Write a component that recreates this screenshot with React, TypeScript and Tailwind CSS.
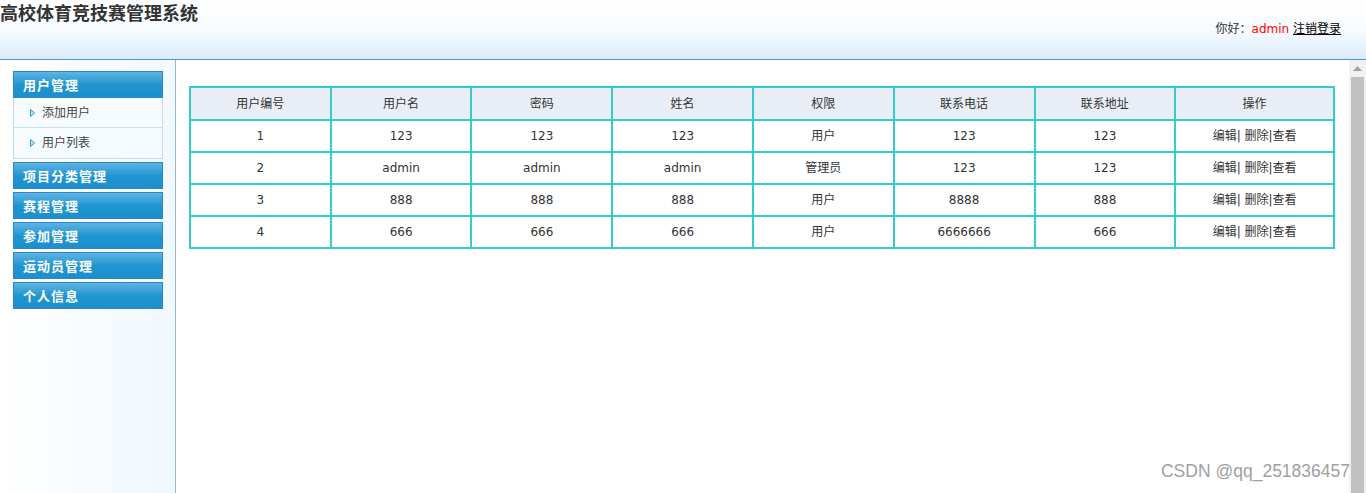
import React from 'react';

const font = '[font-family:"DejaVu_Sans","Noto_Sans_CJK_SC",sans-serif]';

type UserRow = {
  id: string;
  username: string;
  password: string;
  name: string;
  role: string;
  phone: string;
  address: string;
};

const users: UserRow[] = [
  { id: '1', username: '123', password: '123', name: '123', role: '用户', phone: '123', address: '123' },
  { id: '2', username: 'admin', password: 'admin', name: 'admin', role: '管理员', phone: '123', address: '123' },
  { id: '3', username: '888', password: '888', name: '888', role: '用户', phone: '8888', address: '888' },
  { id: '4', username: '666', password: '666', name: '666', role: '用户', phone: '6666666', address: '666' },
];

const columns = ['用户编号', '用户名', '密码', '姓名', '权限', '联系电话', '联系地址', '操作'];

/** Blue menu header bar */
function MenuHeader({ title }: { title: string }) {
  return (
    <div className="flex h-[27px] items-center border border-[#2f86c6] bg-gradient-to-b from-[#5db4e2] via-[#1f96d1] to-[#1c8fcc] pl-[9px] text-[13px] font-bold tracking-[1px] text-white [font-family:'Noto_Sans_CJK_SC',sans-serif]">
      {title}
    </div>
  );
}

function SubItem({ label }: { label: string }) {
  return (
    <div className="flex h-[30px] items-center gap-[7px] border-b border-[#cddfea] pl-[16px] text-[12px] text-[#444] last:border-b-0">
      <svg width="5" height="8" viewBox="0 0 5 8">
        <path d="M0.5 0.5 L4.5 4 L0.5 7.5 Z" fill="#bfe3f7" stroke="#3593d1" strokeWidth="1" />
      </svg>
      <span>{label}</span>
    </div>
  );
}

export default function App() {
  return (
    <div className={`relative flex h-screen flex-col overflow-hidden bg-white ${font}`}>
      {/* ===== HEADER ===== */}
      <header className="flex h-[60px] shrink-0 justify-between border-b border-[#4b92cf] bg-gradient-to-b from-white via-[#f7fbff] to-[#dcecfb]">
        <h1 className="pt-[1px] text-[18px] font-bold leading-[22px] text-[#333] [font-family:'Noto_Sans_CJK_SC',sans-serif]">
          高校体育竞技赛管理系统
        </h1>
        <div className="pr-[25px] pt-[20px] text-[12px] text-[#333]">
          你好：<span className="text-[#ff0000]">admin</span>{' '}
          <a className="text-black underline">注销登录</a>
        </div>
      </header>

      <div className="flex min-h-0 flex-1">
        {/* ===== SIDEBAR ===== */}
        <aside className="w-[176px] shrink-0 border-r border-[#93b7d3] bg-gradient-to-r from-white to-[#f1f8fe] px-[13px] pt-[11px]">
          <div className="w-[150px]">
            <MenuHeader title="用户管理" />
            <div className="border-x border-b border-[#c9dce8] bg-[#f6fbff]">
              <SubItem label="添加用户" />
              <SubItem label="用户列表" />
            </div>
            <div className="mt-[3px] flex flex-col gap-[3px]">
              <MenuHeader title="项目分类管理" />
              <MenuHeader title="赛程管理" />
              <MenuHeader title="参加管理" />
              <MenuHeader title="运动员管理" />
              <MenuHeader title="个人信息" />
            </div>
          </div>
        </aside>

        {/* ===== MAIN ===== */}
        <main className="min-w-0 flex-1 pl-[13px] pr-[14px] pt-[26px]">
          <table className="w-full border-collapse text-center text-[12px] text-[#333]">
            <thead>
              <tr className="bg-[#e9eef6]">
                {columns.map((c, i) => (
                  <th
                    key={c}
                    className={`h-[33px] border-2 border-[#33cccc] font-normal ${i === 7 ? 'w-[159px]' : 'w-[141px]'}`}
                  >
                    {c}
                  </th>
                ))}
              </tr>
            </thead>
            <tbody>
              {users.map((u) => (
                <tr key={u.id}>
                  <td className="h-[32px] border-2 border-[#33cccc]">{u.id}</td>
                  <td className="border-2 border-[#33cccc]">{u.username}</td>
                  <td className="border-2 border-[#33cccc]">{u.password}</td>
                  <td className="border-2 border-[#33cccc]">{u.name}</td>
                  <td className="border-2 border-[#33cccc]">{u.role}</td>
                  <td className="border-2 border-[#33cccc]">{u.phone}</td>
                  <td className="border-2 border-[#33cccc]">{u.address}</td>
                  <td className="border-2 border-[#33cccc]">
                    <a>编辑</a>| <a>删除</a>|<a>查看</a>
                  </td>
                </tr>
              ))}
            </tbody>
          </table>
        </main>

        {/* scrollbar of the content frame */}
        <div className="flex w-[17px] shrink-0 flex-col items-center bg-[#f1f1f1]">
          <svg className="mt-[6px]" width="9" height="5" viewBox="0 0 9 5">
            <path d="M0 5 L4.5 0 L9 5 Z" fill="#a3a3a3" />
          </svg>
          <div className="mt-[6px] w-[13px] flex-1 bg-[#c1c1c1]" />
        </div>
      </div>

      <div className="absolute bottom-[9px] right-[16px] text-[17.5px] text-[#a0a0a0] [font-family:'Liberation_Sans',sans-serif] [text-shadow:0_0_1px_#fff]">
        CSDN @qq_251836457
      </div>
    </div>
  );
}
